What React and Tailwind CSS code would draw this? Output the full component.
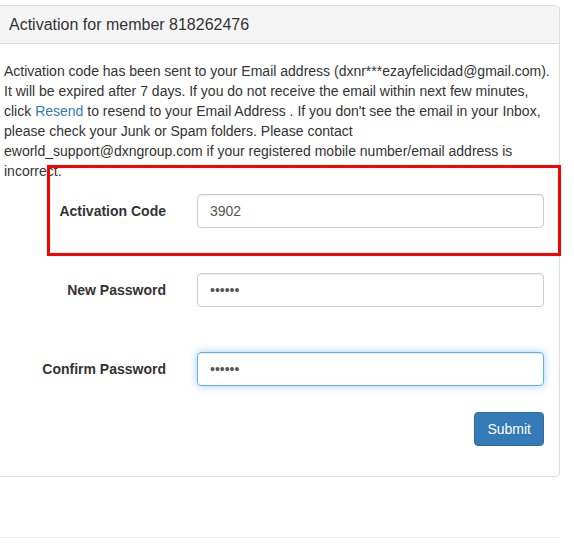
const rows = [
  { label: 'Activation Code', type: 'text', value: '3902' },
  { label: 'New Password', type: 'password', value: '123456' },
  { label: 'Confirm Password', type: 'password', value: '123456', focused: true },
]

function Field({ label, type, value, focused }) {
  return (
    <div className="flex items-center">
      <label className="w-[162px] shrink-0 text-right text-[14px] font-bold text-[#333]">{label}</label>
      <input
        type={type}
        defaultValue={value}
        readOnly
        className={
          focused
            ? 'ml-[31px] h-[34px] w-[347px] rounded-[4px] border border-[#66afe9] px-3 text-[14px] text-[#555] shadow-[inset_0_1px_1px_rgba(0,0,0,0.075),0_0_8px_rgba(102,175,233,0.6)] outline-none'
            : 'ml-[31px] h-[34px] w-[347px] rounded-[4px] border border-[#ccc] px-3 text-[14px] text-[#555] shadow-[inset_0_1px_1px_rgba(0,0,0,0.075)] outline-none'
        }
      />
    </div>
  )
}

export default function App() {
  return (
    <div className="relative min-h-[545px] overflow-hidden bg-white pt-[5px] font-['Liberation_Sans',Arial,sans-serif] text-[14px] leading-[20px] text-[#333]">
      {/* Panel */}
      <div className="ml-[-6px] w-[566px] rounded-[4px] border border-[#ddd] bg-white">
        <div className="rounded-t-[4px] border-b border-[#ddd] bg-[#f5f5f5] px-[14px] py-[10px] text-[16px] leading-[17px]">
          Activation for member 818262476
        </div>
        <div className="pb-[15px] pl-[9px] pr-[8px] pt-[17px]">
          <p className="mb-[13px] w-[547px]">
            Activation code has been sent to your Email address (dxnr***ezayfelicidad@gmail.com). It will be expired after 7 days. If you do not receive the email within next few minutes, click{' '}
            <a className="text-[#337ab7]">Resend</a> to resend to your Email Address . If you don't see the email in your Inbox, please check your Junk or Spam folders. Please contact eworld_support@dxngroup.com if your registered mobile number/email address is incorrect.
          </p>
          <div className="flex flex-col gap-[45px]">
            {rows.map(r => <Field key={r.label} {...r} />)}
          </div>
          <div className="mt-[26px] mb-[15px] flex w-[540px] justify-end">
            <button className="h-[34px] rounded-[4px] border border-[#2e6da4] bg-[#337ab7] px-[12px] text-[14px] text-white">
              Submit
            </button>
          </div>
        </div>
      </div>

      <div className="mt-[60px] w-[560px] border-t border-[#eee]" />

      {/* highlight */}
      <div className="absolute left-[47px] top-[165px] h-[91px] w-[514px] border-[3px] border-[#ff0000]" />
    </div>
  )
}
